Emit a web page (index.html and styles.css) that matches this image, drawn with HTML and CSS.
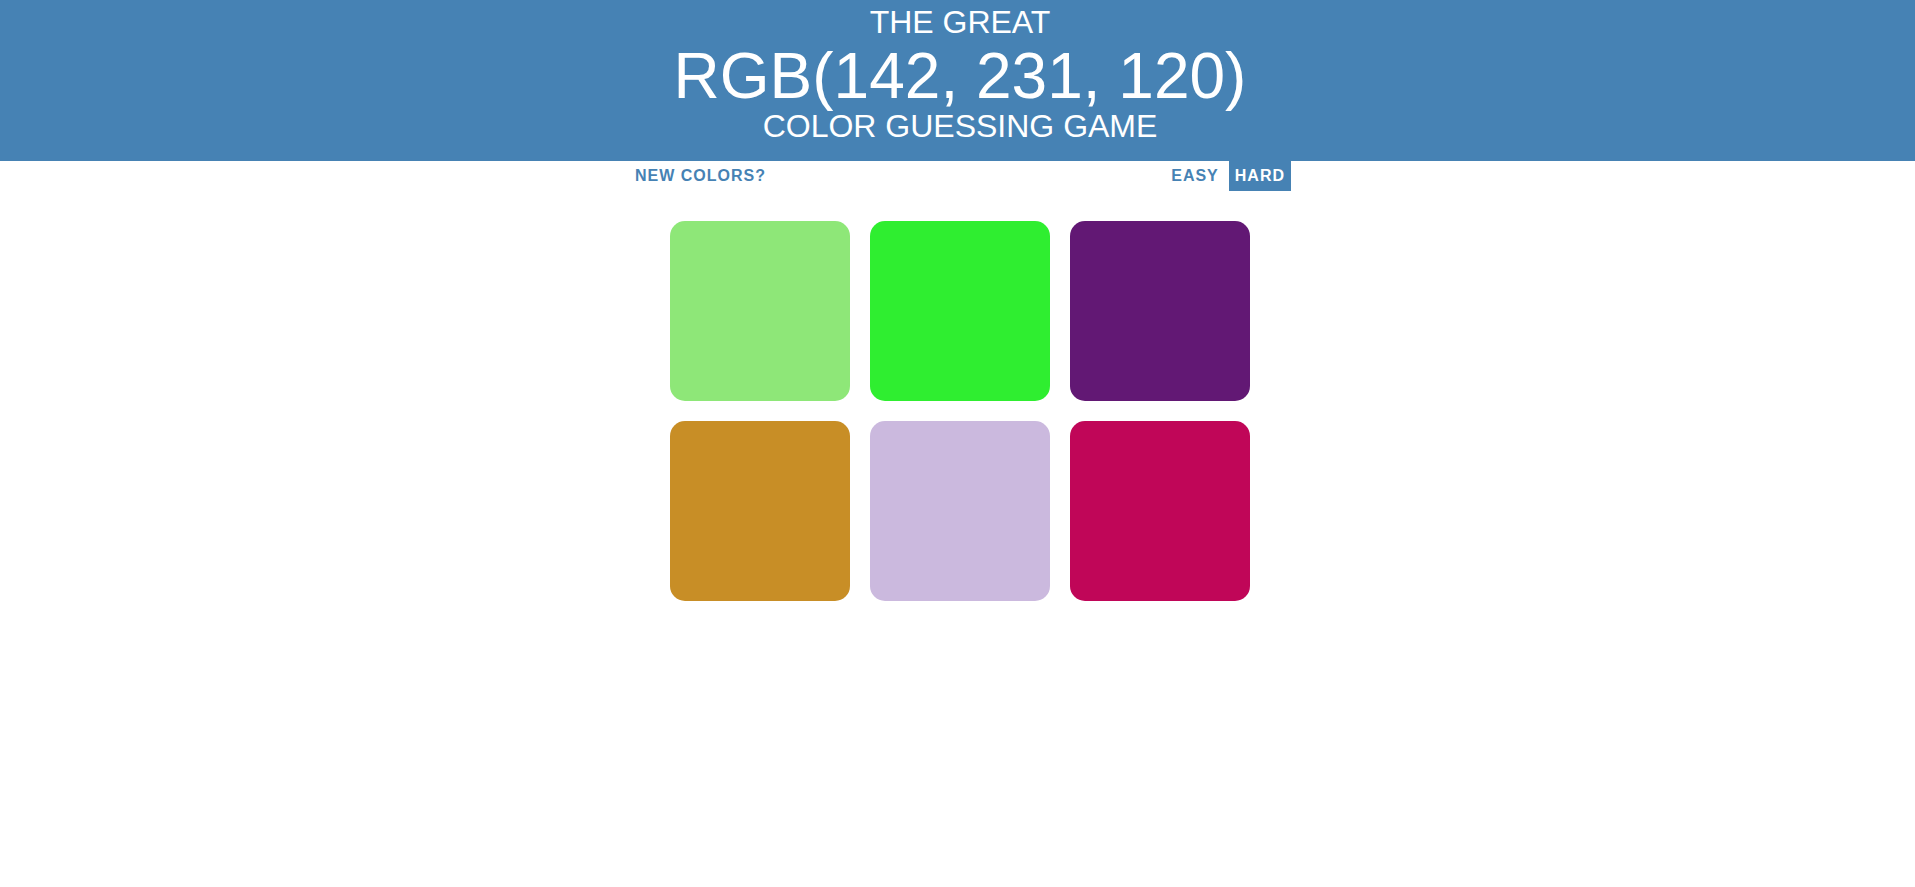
FILE: index.html
```html
<!DOCTYPE html>
<html lang="en">
<head>
<meta charset="utf-8">
<title>Color Game</title>
<link rel="stylesheet" href="styles.css">
</head>
<body>
  <header class="title">
    <div class="title-line">The Great</div>
    <div class="title-color">RGB(142, 231, 120)</div>
    <div class="title-line title-line-last">Color Guessing Game</div>
  </header>

  <nav class="stripe">
    <button class="btn">New Colors?</button>
    <div class="modes">
      <button class="btn">Easy</button>
      <button class="btn btn-selected">Hard</button>
    </div>
  </nav>

  <main class="board">
    <div class="square" style="background: rgb(142, 231, 120);"></div>
    <div class="square" style="background: rgb(47, 238, 48);"></div>
    <div class="square" style="background: rgb(98, 24, 116);"></div>
    <div class="square" style="background: rgb(200, 142, 38);"></div>
    <div class="square" style="background: rgb(203, 185, 222);"></div>
    <div class="square" style="background: rgb(192, 6, 88);"></div>
  </main>
</body>
</html>
```

FILE: styles.css
```css
html, body {
  margin: 0;
  padding: 0;
  background: #ffffff;
  font-family: "Liberation Sans", Arial, Helvetica, sans-serif;
}

/* Title banner */
.title {
  background: steelblue;
  color: #ffffff;
  text-align: center;
  text-transform: uppercase;
  font-weight: normal;
  padding: 6px 0 22px 5px;
}

.title-line {
  font-size: 32px;
  line-height: 32px;
}

.title-line-last {
  line-height: 25px;
}

.title-color {
  font-size: 64px;
  line-height: 76px;
}

/* Controls strip */
.stripe {
  width: 662px;
  height: 30px;
  margin: 0 auto;
  padding-left: 5px;
  display: flex;
  justify-content: space-between;
  background: #ffffff;
}

.modes {
  display: flex;
  gap: 4px;
  height: 100%;
}

.btn {
  border: none;
  background: none;
  height: 30px;
  padding: 0 6px;
  margin: 0;
  font-family: inherit;
  font-size: 16px;
  font-weight: 700;
  letter-spacing: 1px;
  text-transform: uppercase;
  color: steelblue;
  cursor: pointer;
  outline: none;
}

.btn-selected {
  background: steelblue;
  color: #ffffff;
}

/* Color squares */
.board {
  width: 580px;
  margin: 30px auto 0;
  padding-left: 5px;
  display: grid;
  grid-template-columns: repeat(3, 180px);
  gap: 20px;
}

.square {
  width: 180px;
  height: 180px;
  border-radius: 15px;
}
```
